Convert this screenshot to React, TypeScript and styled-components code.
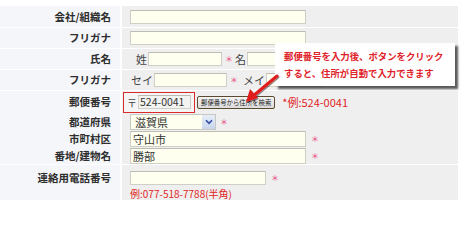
import React from 'react';
import styled, { createGlobalStyle } from 'styled-components';

const GlobalStyle = createGlobalStyle`
  html, body {
    margin: 0;
    padding: 0;
    background: #ffffff;
  }
  body {
    font-family: 'Noto Sans CJK JP', 'Noto Sans', sans-serif;
    color: #333333;
  }
`;

const Page = styled.div`
  width: 474px;
  height: 203px;
  padding-top: 6px;
  box-sizing: border-box;
  overflow: hidden;
`;

const Table = styled.div`
  position: relative;
  width: 458px;
  display: flex;
  flex-direction: column;
  gap: 1px;
  background: #ffffff;
`;

const Group = styled.div`
  display: flex;
  flex-direction: column;
`;

const Row = styled.div<{ $h: number }>`
  display: grid;
  grid-template-columns: 120px 1fr;
  column-gap: 2px;
  height: ${p => p.$h}px;
  align-items: stretch;
`;

const Label = styled.div<{ $top?: number }>`
  background: #f4f6f9;
  display: flex;
  justify-content: flex-end;
  align-items: ${p => (p.$top != null ? 'flex-start' : 'center')};
  padding-top: ${p => p.$top ?? 0}px;
  padding-right: 9px;
  font-size: 10.5px;
  line-height: 14px;
  font-weight: 700;
  color: #2e2e2e;
  white-space: nowrap;
`;

const Value = styled.div<{ $column?: boolean }>`
  background: #efefef;
  display: flex;
  flex-direction: ${p => (p.$column ? 'column' : 'row')};
  align-items: ${p => (p.$column ? 'flex-start' : 'center')};
  padding-left: 8px;
  padding-top: ${p => (p.$column ? 6 : 0)}px;
  gap: ${p => (p.$column ? 3 : 0)}px;
  font-size: 11px;
`;

const Field = styled.div`
  display: flex;
  align-items: center;
`;

const Input = styled.div<{ $w: number; $grey?: boolean; $h?: number }>`
  width: ${p => p.$w}px;
  height: ${p => p.$h ?? 14}px;
  box-sizing: border-box;
  border: 1px solid #cfcfc8;
  border-top-color: #bdbdb6;
  background: ${p => (p.$grey ? '#f3f3f1' : '#fffff0')};
  font-size: ${p => (p.$grey ? 10.5 : 11)}px;
  line-height: ${p => (p.$h ?? 14) - 2}px;
  padding-left: ${p => (p.$grey ? 1 : 2)}px;
  color: #333333;
  white-space: nowrap;
  overflow: hidden;
`;

const Prefix = styled.span<{ $ml?: number }>`
  font-size: 11px;
  color: #444444;
  margin-left: ${p => p.$ml ?? 0}px;
  margin-right: 1px;
`;

const Req = styled.span<{ $ml?: number }>`
  color: #e8457a;
  font-size: 8px;
  line-height: 8px;
  margin-left: ${p => p.$ml ?? 3}px;
  margin-right: 1px;
`;

const PostBox = styled.div`
  margin-left: -7px;
  height: 21px;
  box-sizing: border-box;
  border: 1.5px solid #d92b2b;
  display: flex;
  align-items: center;
  padding: 0 3px;
  background: #f5f5f5;
`;

const Postmark = styled.span`
  font-size: 10px;
  color: #444444;
  width: 11px;
`;

const SearchButton = styled.div`
  margin-left: 2px;
  height: 13px;
  box-sizing: border-box;
  padding: 0 3px;
  border: 1px solid #5b4a2e;
  border-radius: 2px;
  background: linear-gradient(#f4f4f4, #dcdcdc);
  font-size: 6.4px;
  line-height: 11px;
  color: #222222;
  white-space: nowrap;
`;

const Example = styled.span<{ $ml?: number; $size?: number }>`
  color: #e02525;
  font-size: ${p => p.$size ?? 10}px;
  line-height: 12px;
  margin-left: ${p => p.$ml ?? 0}px;
  white-space: nowrap;
`;

const Select = styled.div`
  width: 86px;
  height: 16px;
  box-sizing: border-box;
  border: 1px solid #c8c8c2;
  background: #fffff0;
  display: flex;
  align-items: center;
  justify-content: space-between;
  padding-left: 4px;
  font-size: 11px;
`;

const SelectArrow = styled.div`
  width: 13px;
  height: 14px;
  background: linear-gradient(#e6edf8, #c9d6ec);
  display: flex;
  align-items: center;
  justify-content: center;
`;

const Popup = styled.div`
  position: absolute;
  left: 275px;
  top: 37px;
  width: 180px;
  height: 43px;
  box-sizing: border-box;
  background: #ffffff;
  box-shadow: 3px 3px 2px rgba(40, 40, 40, 0.75);
  display: flex;
  flex-direction: column;
  justify-content: center;
  padding-left: 9px;
  gap: 4px;
  color: #e0222a;
  font-size: 9.4px;
  font-weight: 700;
  line-height: 13px;
  white-space: nowrap;
`;

const Arrow = styled.svg`
  position: absolute;
  left: 243px;
  top: 66px;
`;

const App = () => {
  return (
    <Page>
      <GlobalStyle />
      <Table>
        <Row $h={21}>
          <Label>会社/組織名</Label>
          <Value>
            <Input $w={176} />
          </Value>
        </Row>
        <Row $h={20}>
          <Label>フリガナ</Label>
          <Value>
            <Input $w={176} />
          </Value>
        </Row>
        <Row $h={20}>
          <Label>氏名</Label>
          <Value>
            <Field>
              <Prefix $ml={6}>姓</Prefix>
              <Input $w={74} />
              <Req>＊</Req>
              <Prefix $ml={1}>名</Prefix>
              <Input $w={60} />
            </Field>
          </Value>
        </Row>
        <Row $h={20}>
          <Label>フリガナ</Label>
          <Value>
            <Field>
              <Prefix $ml={1}>セイ</Prefix>
              <Input $w={73} />
              <Req>＊</Req>
              <Prefix $ml={4}>メイ</Prefix>
              <Input $w={60} />
            </Field>
          </Value>
        </Row>
        <Group>
          <Row $h={22}>
            <Label>郵便番号</Label>
            <Value>
              <PostBox>
                <Postmark>〒</Postmark>
                <Input $w={53} $grey>
                  524-0041
                </Input>
              </PostBox>
              <SearchButton>郵便番号から住所を検索</SearchButton>
              <Example $ml={7} $size={11}>
                *例:524-0041
              </Example>
            </Value>
          </Row>
          <Row $h={17}>
            <Label>都道府県</Label>
            <Value>
              <Select>
                滋賀県
                <SelectArrow>
                  <svg width="8" height="6" viewBox="0 0 8 6">
                    <path d="M1 1.2 L4 4.4 L7 1.2" fill="none" stroke="#3050a8" strokeWidth="1.6" />
                  </svg>
                </SelectArrow>
              </Select>
              <Req $ml={4}>＊</Req>
            </Value>
          </Row>
          <Row $h={17}>
            <Label>市町村区</Label>
            <Value>
              <Input $w={176} $h={16}>
                守山市
              </Input>
              <Req $ml={5}>＊</Req>
            </Value>
          </Row>
          <Row $h={17}>
            <Label>番地/建物名</Label>
            <Value>
              <Input $w={176} $h={16}>
                勝部
              </Input>
              <Req $ml={5}>＊</Req>
            </Value>
          </Row>
        </Group>
        <Row $h={35}>
          <Label $top={6}>連絡用電話番号</Label>
          <Value $column>
            <Field>
              <Input $w={136} />
              <Req $ml={5}>＊</Req>
            </Field>
            <Example>例:077-518-7788(半角)</Example>
          </Value>
        </Row>
        <Popup>
          <span>郵便番号を入力後、ボタンをクリック</span>
          <span>すると、住所が自動で入力できます</span>
        </Popup>
        <Arrow width="40" height="34" viewBox="0 0 40 34">
          <defs>
            <filter id="sh" x="-20%" y="-20%" width="160%" height="160%">
              <feDropShadow dx="1" dy="1" stdDeviation="0.6" floodColor="#000" floodOpacity="0.45" />
            </filter>
          </defs>
          <g filter="url(#sh)">
            <line x1="34" y1="4" x2="10" y2="24" stroke="#e01e1e" strokeWidth="3" strokeLinecap="round" />
            <path d="M3 30 L7 17 L15 26 Z" fill="#e01e1e" />
          </g>
        </Arrow>
      </Table>
    </Page>
  );
};

export default App;
